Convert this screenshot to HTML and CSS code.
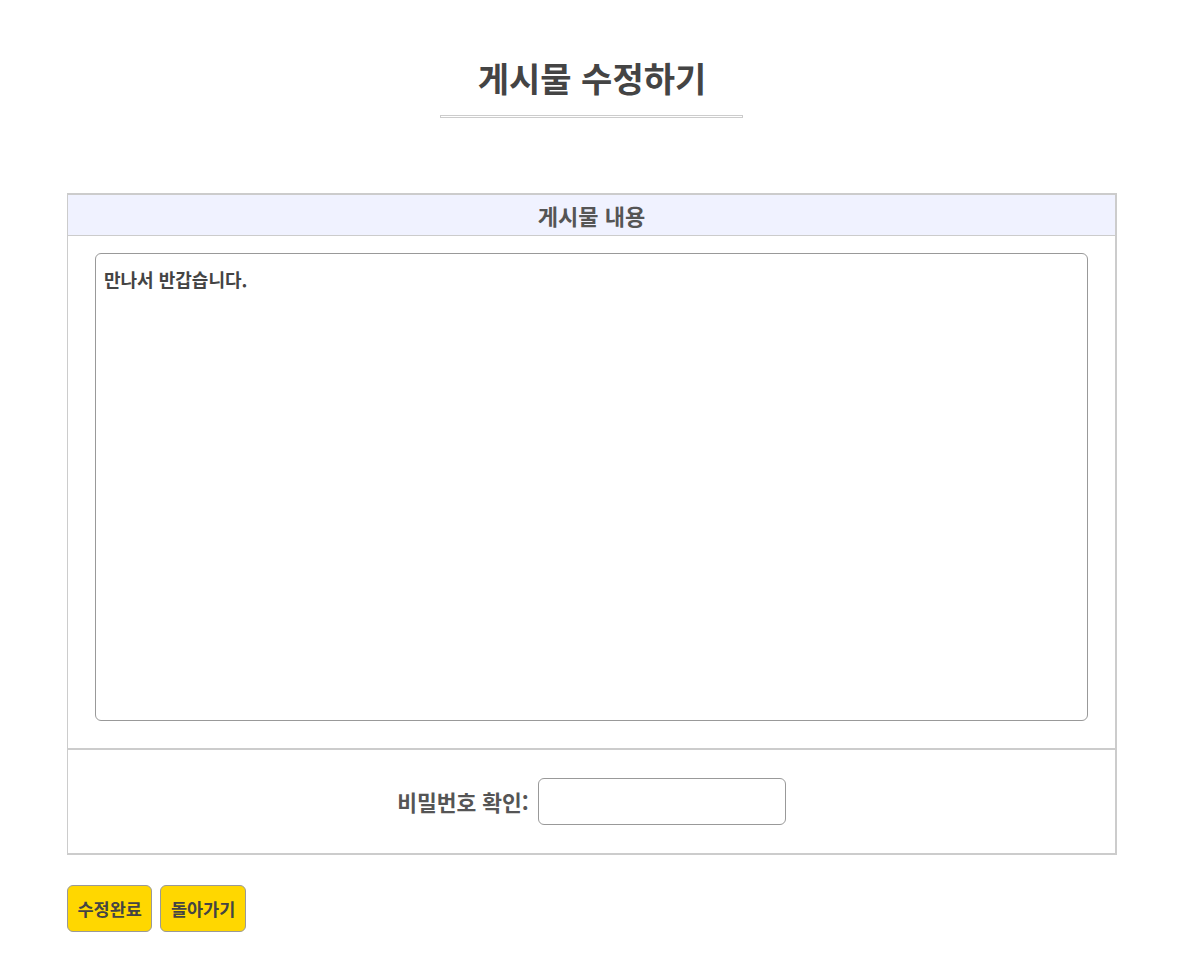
FILE: index.html
```html
<!DOCTYPE html>
<html lang="ko">
  <head>
    <meta charset="UTF-8" />
    <meta name="viewport" content="width=device-width, initial-scale=1.0" />
    <title>게시물 수정하기</title>
    <link rel="stylesheet" href="styles.css">
  </head>
  <body>
    <div class="page">
      <h1 class="page-title">게시물 수정하기</h1>
      <div class="title-line"></div>

      <form class="edit-form">
        <div class="edit-box">
          <div class="box-head">게시물 내용</div>
          <div class="box-body">
            <textarea class="content-input">만나서 반갑습니다.</textarea>
          </div>
          <div class="box-pass">
            <label for="pw" class="pass-label">비밀번호 확인:</label>
            <input type="password" id="pw" class="pass-input" />
          </div>
        </div>
        <div class="btn-row">
          <button type="button" class="btn">수정완료</button>
          <button type="button" class="btn">돌아가기</button>
        </div>
      </form>
    </div>
  </body>
</html>
```

FILE: styles.css
```css
body {
  margin: 0;
  font-family: "Noto Sans CJK KR", "Noto Sans", sans-serif;
  color: #444;
  background: #fff;
}
.page {
  width: 1050px;
  margin: 0 0 0 67px;
  padding-top: 50px;
}
.page-title {
  margin: 0;
  text-align: center;
  font-size: 34px;
  line-height: 56px;
  font-weight: 700;
  color: #444;
}
.title-line {
  width: 301px;
  height: 1px;
  margin: 9px 0 0 373px;
  border: 1px solid #ccc;
}
.edit-form {
  margin-top: 75px;
}
.edit-box {
  border: 2px solid #ccc;
  border-left-width: 1px;
}
.box-head {
  height: 40px;
  line-height: 40px;
  background: #f0f2ff;
  border-bottom: 1px solid #ccc;
  text-align: center;
  font-size: 22px;
  font-weight: 700;
  color: #555;
}
.box-body {
  padding: 17px 27px 27px 27px;
  border-bottom: 2px solid #ccc;
}
.content-input {
  display: block;
  box-sizing: border-box;
  width: 100%;
  height: 468px;
  padding: 8px;
  border: 1px solid #999;
  border-radius: 6px;
  resize: none;
  font-family: inherit;
  font-size: 18px;
  font-weight: 700;
  line-height: 34px;
  color: #444;
  outline: none;
}
.box-pass {
  display: flex;
  justify-content: center;
  align-items: center;
  gap: 9px;
  height: 103px;
}
.pass-label {
  font-size: 21.5px;
  font-weight: 700;
  color: #555;
}
.pass-input {
  box-sizing: border-box;
  width: 248px;
  height: 47px;
  border: 1px solid #999;
  border-radius: 6px;
  outline: none;
}
.btn-row {
  display: flex;
  gap: 8px;
  margin-top: 30px;
}
.btn {
  height: 47px;
  padding: 0 9.5px;
  background: #ffd700;
  border: 1px solid #999;
  border-radius: 6px;
  font-family: inherit;
  font-size: 17.5px;
  font-weight: 700;
  color: #444;
  cursor: pointer;
}
```
